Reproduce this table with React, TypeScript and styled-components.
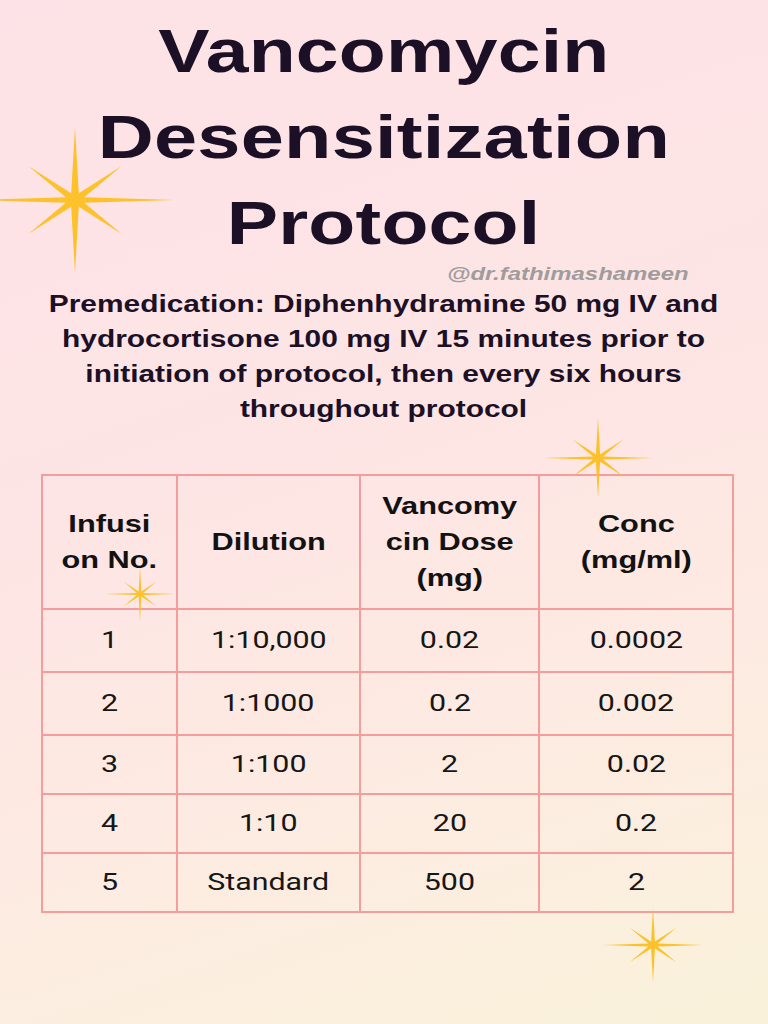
import * as React from "react";
import styled, {createGlobalStyle} from "styled-components";


// --------------- Data

type Row = {
  infusion : string
  , dilution : string
  , dose : string
  , conc : string
  , height : number
}

const rows : Row[] = [
  {infusion: "1", dilution: "1:10,000", dose: "0.02", conc: "0.0002", height: 63},
  {infusion: "2", dilution: "1:1000", dose: "0.2", conc: "0.002", height: 63},
  {infusion: "3", dilution: "1:100", dose: "2", conc: "0.02", height: 59},
  {infusion: "4", dilution: "1:10", dose: "20", conc: "0.2", height: 59},
  {infusion: "5", dilution: "Standard", dose: "500", conc: "2", height: 59},
];

type StarSpec = { cx : number, cy : number, w : number, h : number };

const stars : StarSpec[] = [
  {cx: 75, cy: 200, w: 100, h: 73},
  {cx: 598, cy: 458, w: 55, h: 40},
  {cx: 140, cy: 594, w: 35, h: 27},
  {cx: 653, cy: 945, w: 50, h: 37},
];

// 8 point sparkle: long horizontal / vertical arms, shorter diagonals
const sparklePoints = () => {
  const pts : string[] = [];
  for (let k = 0; k < 8; k++) {
    const a = (k * Math.PI) / 4;
    const R = k % 2 === 0 ? 1 : 0.66;
    pts.push(`${(Math.cos(a) * R).toFixed(3)},${(Math.sin(a) * R).toFixed(3)}`);
    const b = a + Math.PI / 8;
    const r = 0.1;
    pts.push(`${(Math.cos(b) * r).toFixed(3)},${(Math.sin(b) * r).toFixed(3)}`);
  }
  return pts.join(" ");
};

// --------------- Component

const Sparkle = ({cx, cy, w, h} : StarSpec) => (
  <StarSvg
    $left={cx - w}
    $top={cy - h}
    width={w * 2}
    height={h * 2}
    viewBox="-1 -1 2 2"
    preserveAspectRatio="none"
  >
    <polygon points={sparklePoints()} fill="#fcc12b" />
  </StarSvg>
);

export default function App() {
  return (
    <Page>
      <GlobalStyle />

      <Title>
        <Wide $x={1.24}>Vancomycin</Wide><br />
        <Wide $x={1.25}>Desensitization</Wide><br />
        <Wide $x={1.24}>Protocol</Wide>
      </Title>

      <Handle>
        <Wide $x={1.26}>@dr.fathimashameen</Wide>
      </Handle>

      <Premedication>
        <Wide $x={1.3}>
          Premedication: Diphenhydramine 50 mg IV and<br />
          hydrocortisone 100 mg IV 15 minutes prior to<br />
          initiation of protocol, then every six hours<br />
          throughout protocol
        </Wide>
      </Premedication>

      <Table>
        <colgroup>
          <col style={{width: 135}} />
          <col style={{width: 183}} />
          <col style={{width: 179}} />
          <col style={{width: 194}} />
        </colgroup>
        <thead>
          <tr>
            <HeadCell><Wide $x={1.28}>Infusi<br />on No.</Wide></HeadCell>
            <HeadCell><Wide $x={1.28}>Dilution</Wide></HeadCell>
            <HeadCell><Wide $x={1.28}>Vancomy<br />cin Dose<br />(mg)</Wide></HeadCell>
            <HeadCell><Wide $x={1.28}>Conc<br />(mg/ml)</Wide></HeadCell>
          </tr>
        </thead>
        <tbody>
          {rows.map(row => (
            <BodyRow key={row.infusion} $h={row.height}>
              <Cell><Wide $x={1.32}>{row.infusion}</Wide></Cell>
              <Cell><Wide $x={1.32}>{row.dilution}</Wide></Cell>
              <Cell><Wide $x={1.32}>{row.dose}</Wide></Cell>
              <Cell><Wide $x={1.32}>{row.conc}</Wide></Cell>
            </BodyRow>
          ))}
        </tbody>
      </Table>

      {stars.map((s, i) => <Sparkle key={i} {...s} />)}
    </Page>
  );
}

// --------------- Styled components

const GlobalStyle = createGlobalStyle`
  html, body {
    margin: 0;
    padding: 0;
  }
  body {
    background: #fde6e4;
  }
`;

const Page = styled.div`
  position: relative;
  width: 768px;
  height: 1024px;
  overflow: hidden;
  padding-top: 8px;
  box-sizing: border-box;
  background: linear-gradient(162deg, #fde2e7 0%, #fde5e4 45%, #fdebe2 70%, #f9f2da 100%);
  color: #1b1026;
`;

const Wide = styled.span<{ $x : number }>`
  display: inline-block;
  white-space: nowrap;
  transform: scaleX(${p => p.$x});
  transform-origin: center;
`;

const Title = styled.h1`
  margin: 0;
  text-align: center;
  font-family: "Liberation Sans", Arial, sans-serif;
  font-weight: 700;
  font-size: 62px;
  line-height: 86px;
  color: #1b1026;
  letter-spacing: 0.2px;
`;

const Handle = styled.div`
  height: 16px;
  display: flex;
  align-items: center;
  justify-content: flex-end;
  padding-right: 104px;
  font-family: "Liberation Sans", Arial, sans-serif;
  font-weight: 700;
  font-style: italic;
  font-size: 19px;
  line-height: 16px;
  color: #a09c9d;
`;

const Premedication = styled.p`
  margin: 5px 0 0;
  text-align: center;
  font-family: "Liberation Sans", Arial, sans-serif;
  font-weight: 700;
  font-size: 23px;
  line-height: 35px;
  color: #1b1026;
`;

const Table = styled.table`
  margin: 47px 0 0 41px;
  width: 693px;
  table-layout: fixed;
  border-collapse: collapse;
  border: 2px solid #f59c9d;
`;

const HeadCell = styled.th`
  height: 132px;
  padding: 0;
  border: 2px solid #f59c9d;
  text-align: center;
  vertical-align: middle;
  font-family: "Liberation Sans", Arial, sans-serif;
  font-weight: 700;
  font-size: 24px;
  line-height: 36px;
  color: #121212;
`;

const BodyRow = styled.tr<{ $h : number }>`
  height: ${p => p.$h}px;
`;

const Cell = styled.td`
  padding: 0;
  border: 2px solid #f59c9d;
  text-align: center;
  vertical-align: middle;
  font-family: Roboto, "Liberation Sans", sans-serif;
  font-weight: 400;
  font-size: 23px;
  line-height: 28px;
  color: #161616;
`;

const StarSvg = styled.svg<{ $left : number, $top : number }>`
  position: absolute;
  left: ${p => p.$left}px;
  top: ${p => p.$top}px;
  z-index: 2;
  pointer-events: none;
`;
